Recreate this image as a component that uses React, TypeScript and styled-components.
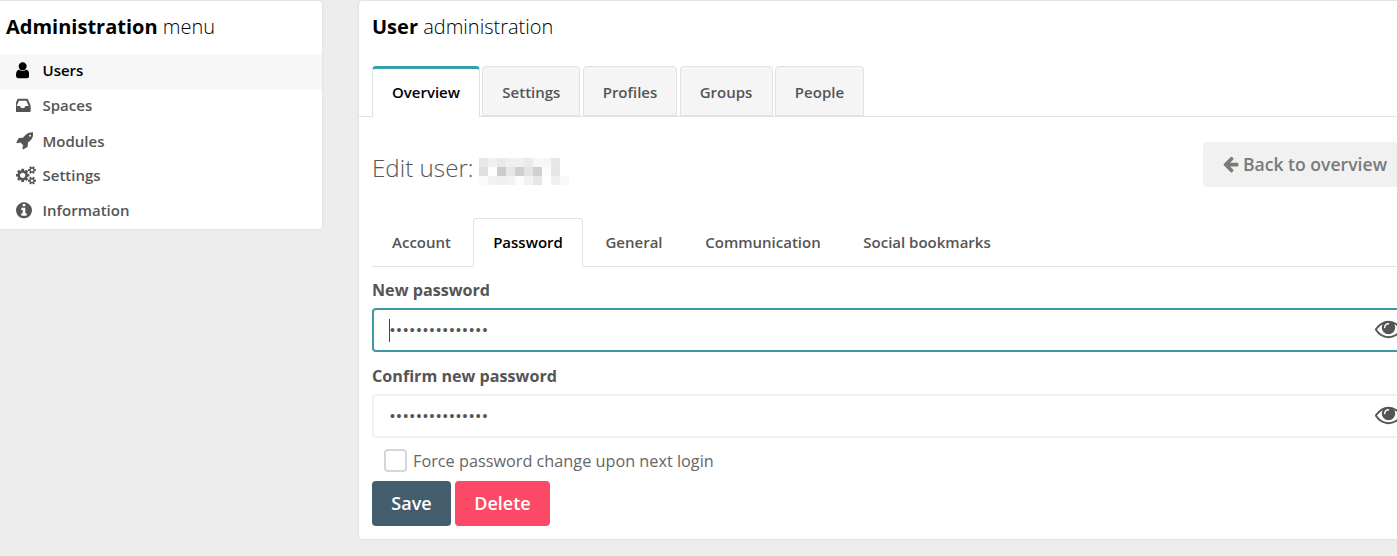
import React from "react";
import styled, { createGlobalStyle } from "styled-components";

const Global = createGlobalStyle`
  html, body { margin: 0; padding: 0; background: #ededed; }
  body { font-family: "Open Sans", "Liberation Sans", sans-serif; color: #555; overflow: hidden; }
`;

const Page = styled.div`
  display: flex;
  align-items: flex-start;
  gap: 37px;
  width: 1397px;
  height: 556px;
  padding-top: 1px;
  box-sizing: border-box;
  overflow: hidden;
`;

const Panel = styled.section`
  background: #fff;
  border-radius: 4px;
  box-shadow: 0 0 3px rgba(0, 0, 0, 0.1);
`;

const SidePanel = styled(Panel)`
  flex: 0 0 322px;
  height: 228px;
  border-radius: 0 4px 4px 0;
`;

const MainPanel = styled(Panel)`
  flex: 0 0 1061px;
  height: 538px;
`;

const Heading = styled.h1<{ $pad: number }>`
  margin: 0;
  height: 53px;
  padding: 12px 0 0 ${(p) => p.$pad}px;
  box-sizing: border-box;
  font-size: 20px;
  line-height: 27px;
  font-weight: 300;
  color: #000;
  strong { font-weight: 700; }
`;

const Menu = styled.nav`
  display: flex;
  flex-direction: column;
`;

const MenuItem = styled.a<{ $active?: boolean }>`
  display: flex;
  align-items: center;
  height: 34.8px;
  padding: 0 0 1px 16px;
  box-sizing: border-box;
  font-size: 15px;
  font-weight: 600;
  color: ${(p) => (p.$active ? "#000" : "#555")};
  background: ${(p) => (p.$active ? "#f7f7f7" : "transparent")};
  &:first-child { height: 36px; padding-bottom: 4px; margin-bottom: -1px; }
  &:nth-child(2) { padding-bottom: 3px; }
`;

const MenuIcon = styled.span`
  display: flex;
  justify-content: flex-start;
  width: 26.5px;
  svg { display: block; }
`;

const TopTabs = styled.div`
  display: flex;
  gap: 2.4px;
  height: 50px;
  margin-top: 12px;
  padding-left: 13px;
  border-bottom: 1px solid #e1e1e1;
`;

const TopTab = styled.a<{ $active?: boolean; $w: number }>`
  display: flex;
  justify-content: center;
  align-items: center;
  box-sizing: border-box;
  width: ${(p) => p.$w}px;
  height: ${(p) => (p.$active ? "51px" : "50px")};
  padding: ${(p) => (p.$active ? "0 0 2px" : "2px 0 0")};
  font-size: 15px;
  font-weight: 600;
  border: 1px solid #e1e1e1;
  border-bottom: ${(p) => (p.$active ? "none" : "1px solid #e1e1e1")};
  border-radius: 4px 4px 0 0;
  color: ${(p) => (p.$active ? "#000" : "#555")};
  background: ${(p) => (p.$active ? "#fff" : "#f5f5f5")};
  border-top: ${(p) => (p.$active ? "3px solid #33a0ab" : "1px solid #e1e1e1")};
`;

const Body = styled.div`
  padding: 25px 13px 0;
`;

const TitleRow = styled.div`
  display: flex;
  justify-content: space-between;
  align-items: flex-start;
  height: 76px;
`;

const EditTitle = styled.h2`
  display: flex;
  align-items: flex-start;
  margin: 0;
  padding-top: 9px;
  font-size: 24.2px;
  line-height: 33px;
  font-weight: 300;
  color: #555;
  svg { margin: 7px 0 0 5px; }
`;

const BackButton = styled.a`
  display: flex;
  align-items: center;
  gap: 4px;
  height: 45px;
  padding: 0 20px 2px;
  box-sizing: border-box;
  border-radius: 4px;
  background: #f1f1f1;
  color: #7a7a7a;
  font-size: 17.6px;
  font-weight: 600;
`;

const SubTabs = styled.div`
  display: flex;
  gap: 2px;
  height: 48px;
  border-bottom: 1px solid #e1e1e1;
`;

const SubTab = styled.a<{ $active?: boolean; $w: number }>`
  display: flex;
  justify-content: center;
  align-items: center;
  box-sizing: border-box;
  width: ${(p) => p.$w}px;
  height: ${(p) => (p.$active ? "49px" : "48px")};
  padding-bottom: ${(p) => (p.$active ? "2px" : "1px")};
  font-size: 15px;
  font-weight: 600;
  border: 1px solid ${(p) => (p.$active ? "#e1e1e1" : "transparent")};
  border-bottom: ${(p) => (p.$active ? "1px solid #fff" : "none")};
  border-radius: 4px 4px 0 0;
  color: ${(p) => (p.$active ? "#000" : "#555")};
  background: ${(p) => (p.$active ? "#fff" : "transparent")};
`;

const Label = styled.label`
  display: block;
  height: 41px;
  padding-top: 12px;
  box-sizing: border-box;
  font-size: 16.15px;
  line-height: 22px;
  font-weight: 700;
  color: #555;
`;

const SecondLabel = styled(Label)`
  height: 42px;
  padding-top: 13px;
`;

const InputBox = styled.div<{ $focus?: boolean }>`
  position: relative;
  display: flex;
  align-items: center;
  box-sizing: border-box;
  height: 44px;
  padding-left: 16px;
  border: 2px solid ${(p) => (p.$focus ? "#41979f" : "#f0f0f0")};
  border-radius: 4px;
`;

const Caret = styled.span`
  position: absolute;
  left: 15px;
  top: 9px;
  width: 1px;
  height: 23px;
  background: #444;
`;

const Dots = styled.span`
  font-size: 14px;
  letter-spacing: 1.7px;
  line-height: 1;
  color: #555;
  font-family: "Liberation Sans", sans-serif;
`;

const Eye = styled.span`
  position: absolute;
  right: 3px;
  top: 5px;
  color: #555;
  svg { display: block; }
`;

const CheckRow = styled.div`
  display: flex;
  align-items: center;
  gap: 6px;
  height: 43px;
  padding: 2px 0 0 12px;
  box-sizing: border-box;
  font-size: 16.25px;
  color: #666;
`;

const CheckBox = styled.span`
  box-sizing: border-box;
  width: 23px;
  height: 23px;
  border: 2px solid #d6d6d6;
  border-radius: 4px;
  background: #fff;
`;

const Buttons = styled.div`
  display: flex;
  gap: 4px;
`;

const Button = styled.button<{ $bg: string; $w: number }>`
  width: ${(p) => p.$w}px;
  height: 45px;
  padding: 0 0 2px;
  border: none;
  border-radius: 4px;
  background: ${(p) => p.$bg};
  color: #fff;
  font-family: inherit;
  font-size: 18px;
  font-weight: 600;
`;

const Icon = ({ d, size = 18, x = 0, w = 1792 }: { d: string; size?: number; x?: number; w?: number }) => (
  <svg width={(size * w) / 1792} height={size} viewBox={`${x} 0 ${w} 1792`} fill="currentColor">
    <path d={d} />
  </svg>
);

const USER = "M1536 1399q0 109-62.5 187t-150.5 78h-854q-88 0-150.5-78t-62.5-187q0-85 8.5-160.5t31.5-152 58.5-131 94-89 134.5-34.5q131 128 313 128t313-128q76 0 134.5 34.5t94 89 58.5 131 31.5 152 8.5 160.5zm-256-887q0 159-112.5 271.5t-271.5 112.5-271.5-112.5-112.5-271.5 112.5-271.5 271.5-112.5 271.5 112.5 112.5 271.5z";
const INBOX = "M1023 960h316q-1-3-2.5-8.5t-2.5-7.5l-212-496h-708l-212 496q-1 3-2.5 8.5t-2.5 7.5h316l95 192h320zm513 30v482q0 26-19 45t-45 19h-1408q-26 0-45-19t-19-45v-482q0-62 25-123l238-552q10-25 36.5-42t52.5-17h832q26 0 52.5 17t36.5 42l238 552q25 61 25 123z";
const ROCKET = "M1504 448q0-40-28-68t-68-28-68 28-28 68 28 68 68 28 68-28 28-68zm224-288q0 249-75.5 430.5t-253.5 360.5q-81 80-195 176l-20 379q-2 16-16 26l-384 224q-7 4-16 4-12 0-23-9l-64-64q-13-14-8-32l85-276-281-281-276 85q-3 1-9 1-14 0-23-9l-64-64q-17-19-5-39l224-384q10-14 26-16l379-20q96-114 176-195 188-187 358-258t431-71q14 0 24 9.5t10 22.5z";
const COGS = "M896 896q0-106-75-181t-181-75-181 75-75 181 75 181 181 75 181-75 75-181zm768 512q0-52-38-90t-90-38-90 38-38 90q0 53 37.5 90.5t90.5 37.5 90.5-37.5 37.5-90.5zm0-1024q0-52-38-90t-90-38-90 38-38 90q0 53 37.5 90.5t90.5 37.5 90.5-37.5 37.5-90.5zm-384 421v185q0 10-7 19.5t-16 10.5l-155 24q-11 35-32 76 34 48 90 115 7 11 7 20 0 12-7 19-23 30-82.5 89.5t-78.5 59.5q-11 0-21-7l-115-90q-37 19-77 31-11 108-23 155-7 24-30 24h-186q-11 0-20-7.5t-10-17.5l-23-153q-34-10-75-31l-118 89q-7 7-20 7-11 0-21-8-144-133-144-160 0-9 7-19 10-14 41-53t47-61q-23-44-35-82l-152-24q-10-1-17-9.5t-7-19.5v-185q0-10 7-19.5t16-10.5l155-24q11-35 32-76-34-48-90-115-7-11-7-20 0-12 7-20 22-30 82-89t79-59q11 0 21 7l115 90q34-18 77-32 11-108 23-154 7-24 30-24h186q11 0 20 7.5t10 17.5l23 153q34 10 75 31l118-89q8-7 20-7 11 0 21 8 144 133 144 160 0 8-7 19-12 16-42 54t-45 60q23 48 34 82l152 23q10 2 17 10.5t7 19.5zm640 533v140q0 16-149 31-12 27-30 52 51 113 51 138 0 4-4 7-122 71-124 71-8 0-46-47t-52-68q-20 2-30 2t-30-2q-14 21-52 68t-46 47q-2 0-124-71-4-3-4-7 0-25 51-138-18-25-30-52-149-15-149-31v-140q0-16 149-31 13-29 30-52-51-113-51-138 0-4 4-7 4-2 35-20t59-34 30-16q8 0 46 46.5t52 67.5q20-2 30-2t30 2q51-71 92-112l6-2q4 0 124 70 4 3 4 7 0 25-51 138 17 23 30 52 149 15 149 31zm0-1024v140q0 16-149 31-12 27-30 52 51 113 51 138 0 4-4 7-122 71-124 71-8 0-46-47t-52-68q-20 2-30 2t-30-2q-14 21-52 68t-46 47q-2 0-124-71-4-3-4-7 0-25 51-138-18-25-30-52-149-15-149-31v-140q0-16 149-31 13-29 30-52-51-113-51-138 0-4 4-7 4-2 35-20t59-34 30-16q8 0 46 46.5t52 67.5q20-2 30-2t30 2q51-71 92-112l6-2q4 0 124 70 4 3 4 7 0 25-51 138 17 23 30 52 149 15 149 31z";
const INFO = "M1152 1376v-160q0-14-9-23t-23-9h-96v-512q0-14-9-23t-23-9h-320q-14 0-23 9t-9 23v160q0 14 9 23t23 9h96v320h-96q-14 0-23 9t-9 23v160q0 14 9 23t23 9h448q14 0 23-9t9-23zm-128-896v-160q0-14-9-23t-23-9h-192q-14 0-23 9t-9 23v160q0 14 9 23t23 9h192q14 0 23-9t9-23zm640 416q0 209-103 385.5t-279.5 279.5-385.5 103-385.5-103-279.5-279.5-103-385.5 103-385.5 279.5-279.5 385.5-103 385.5 103 279.5 279.5 103 385.5z";
const ARROW = "M1664 896v128q0 53-32.5 90.5t-84.5 37.5h-704l293 294q38 36 38 90t-38 90l-75 76q-37 37-90 37-52 0-91-37l-651-652q-37-37-37-90 0-52 37-91l651-650q38-38 91-38 52 0 90 38l75 74q38 38 38 91t-38 91l-293 293h704q52 0 84.5 37.5t32.5 90.5z";
const EYE = "M1664 960q-152-236-381-353 61 104 61 225 0 185-131.5 316.5t-316.5 131.5-316.5-131.5-131.5-316.5q0-121 61-225-229 117-381 353 133 205 333.5 326.5t434.5 121.5 434.5-121.5 333.5-326.5zm-720-384q0-20-14-34t-34-14q-125 0-214.5 89.5t-89.5 214.5q0 20 14 34t34 14 34-14 14-34q0-86 61-147t147-61q20 0 34-14t14-34zm848 384q0 34-20 69-140 230-376.5 368.5t-499.5 138.5-499.5-139-376.5-368q-20-35-20-69t20-69q140-229 376.5-368t499.5-139 499.5 139 376.5 368q20 35 20 69z";

const BLUR: string[][] = [
  ["#e8e8e8", "#f0f0f0", "#eaeaea", "#f0f0f0", "#f0f0f0", "#eaeaea", "#f7f7f7", "#f7f7f7", "#e8e8e8", "#ffffff", "#ffffff"],
  ["#e0e0e0", "#fdfdfd", "#cfccc8", "#e3e8ea", "#d0cfcc", "#e0e3e8", "#d2d0ce", "#fbfcff", "#e6e6e6", "#ffffff", "#ffffff"],
  ["#fafafa", "#f1f2f2", "#f0f0f0", "#f2f2f2", "#fcfcfc", "#f2f2f2", "#e6e6e6", "#ffffff", "#f0f0f0", "#f8f8f8", "#ffffff"],
];

const Redacted = () => (
  <svg width="99" height="27" viewBox="0 0 99 27">
    {BLUR.map((row, r) =>
      row.map((c, i) => <rect key={`${r}-${i}`} x={i * 9} y={r * 9} width="9" height="9" fill={c} />)
    )}
  </svg>
);

const items = [
  { label: "Users", d: USER, x: 256, w: 1280, active: true },
  { label: "Spaces", d: INBOX, x: 128, w: 1536 },
  { label: "Modules", d: ROCKET, x: 64, w: 1664 },
  { label: "Settings", d: COGS, x: 0, w: 1920 },
  { label: "Information", d: INFO, x: 128, w: 1536 },
];

const topTabs: [string, number, boolean?][] = [
  ["Overview", 108, true], ["Settings", 98], ["Profiles", 94.4], ["Groups", 93], ["People", 89],
];
const subTabs: [string, number, boolean?][] = [
  ["Account", 99], ["Password", 110, true], ["General", 98], ["Communication", 156], ["Social bookmarks", 168],
];

export default function App() {
  return (
    <Page>
      <Global />
      <SidePanel>
        <Heading $pad={6}><strong>Administration</strong> menu</Heading>
        <Menu>
          {items.map((it) => (
            <MenuItem key={it.label} $active={it.active}>
              <MenuIcon><Icon d={it.d} size={18.67} x={it.x} w={it.w} /></MenuIcon>
              {it.label}
            </MenuItem>
          ))}
        </Menu>
      </SidePanel>
      <MainPanel>
        <Heading $pad={13}><strong>User</strong> administration</Heading>
        <TopTabs>
          {topTabs.map(([t, w, a]) => (
            <TopTab key={t} $w={w} $active={a}>{t}</TopTab>
          ))}
        </TopTabs>
        <Body>
          <TitleRow>
            <EditTitle>Edit user:<Redacted /></EditTitle>
            <BackButton><Icon d={ARROW} size={18} x={128} w={1536} />Back to overview</BackButton>
          </TitleRow>
          <SubTabs>
            {subTabs.map(([t, w, a]) => (
              <SubTab key={t} $w={w} $active={a}>{t}</SubTab>
            ))}
          </SubTabs>
          <Label>New password</Label>
          <InputBox $focus>
            <Caret />
            <Dots>•••••••••••••••</Dots>
            <Eye><Icon d={EYE} size={27} /></Eye>
          </InputBox>
          <SecondLabel>Confirm new password</SecondLabel>
          <InputBox>
            <Dots>•••••••••••••••</Dots>
            <Eye><Icon d={EYE} size={27} /></Eye>
          </InputBox>
          <CheckRow><CheckBox />Force password change upon next login</CheckRow>
          <Buttons>
            <Button $bg="#435d6d" $w={79}>Save</Button>
            <Button $bg="#fc4a66" $w={95}>Delete</Button>
          </Buttons>
        </Body>
      </MainPanel>
    </Page>
  );
}
